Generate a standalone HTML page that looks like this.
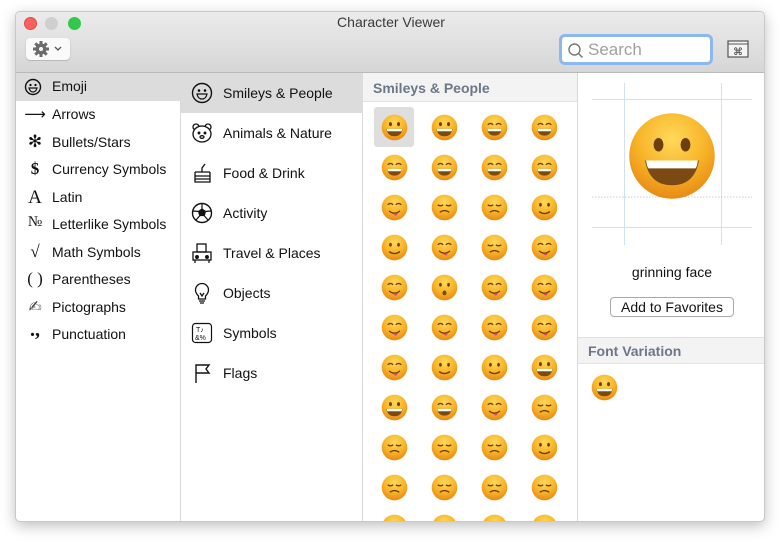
<!DOCTYPE html>
<html><head><meta charset="utf-8"><style>
*{box-sizing:border-box;margin:0;padding:0}
body{width:780px;height:543px;background:#fff;font-family:"Liberation Sans",sans-serif;position:relative;overflow:hidden}
.win{position:absolute;left:15px;top:11px;width:750px;height:511px;border:1px solid #c8c8c8;border-radius:5px;overflow:hidden;box-shadow:0 4px 14px rgba(0,0,0,.25);background:#fff}
.tb{position:absolute;left:0;top:0;width:750px;height:61px;background:linear-gradient(#ebebeb,#d6d6d6);border-bottom:1px solid #b9b9b9}
.dot{position:absolute;top:5px;width:13px;height:13px;border-radius:50%}
.title{position:absolute;top:2px;left:0;width:750px;text-align:center;font-size:14px;color:#3a3a3a}
.gear{position:absolute;left:10px;top:26px;width:44px;height:22px;background:#fafafa;border-radius:4px;box-shadow:0 0.5px 1px rgba(0,0,0,.3)}
.search{position:absolute;left:543px;top:22px;width:154px;height:31px;border:3px solid #8bb8ef;border-radius:6px;background:#fff;font-size:17px;color:#a0a0a0}
.c1{position:absolute;left:0;top:61px;width:165px;height:450px;border-right:1px solid #d8d8d8}
.c2{position:absolute;left:165px;top:61px;width:182px;height:450px;border-right:1px solid #d8d8d8}
.c3{position:absolute;left:347px;top:61px;width:215px;height:450px;border-right:1px solid #d8d8d8}
.c4{position:absolute;left:562px;top:61px;width:188px;height:450px}
.r1{position:absolute;left:0;width:165px;height:27px;font-size:14px;color:#111}
.r1 .i{position:absolute;left:8px;top:3px;width:22px;text-align:center;font-family:"Liberation Serif",serif;font-size:17px}
.r1 .t{position:absolute;left:36px;top:5px}
.r2{position:absolute;left:0;width:182px;height:40px;font-size:14px;color:#111}
.r2 .t{position:absolute;left:42px;top:12px}
.r2 svg{position:absolute;left:10px;top:9px}
.hd{height:29px;background:#f3f3f3;border-bottom:1px solid #e2e2e2;font-weight:bold;font-size:14px;color:#6c7787;padding:7px 0 0 10px}
.e{position:absolute}
</style></head><body>
<div class="win">
<div class="tb">
<div class="dot" style="left:8px;background:#fc605c;border:0.5px solid #de4a45"></div>
<div class="dot" style="left:29px;background:#cfcfcf"></div>
<div class="dot" style="left:52px;background:#34c84a"></div>
<div class="title">Character Viewer</div>
<div class="gear"><svg width="44" height="22"><g transform="translate(15,11)" fill="#6b6b6b"><circle r="5.5"/><g stroke="#6b6b6b" stroke-width="3"><line x1="0" y1="-8" x2="0" y2="8"/><line x1="-8" y1="0" x2="8" y2="0"/><line x1="-5.7" y1="-5.7" x2="5.7" y2="5.7"/><line x1="-5.7" y1="5.7" x2="5.7" y2="-5.7"/></g><circle r="2" fill="#fafafa"/></g><path d="M29 9l3 3 3-3" stroke="#555" fill="none" stroke-width="1.3"/></svg></div>
<div class="search"><svg width="20" height="20" style="position:absolute;left:5px;top:5px"><circle cx="7.5" cy="7.5" r="5.5" stroke="#777" stroke-width="1.4" fill="none"/><line x1="11.5" y1="11.5" x2="15.5" y2="15.5" stroke="#777" stroke-width="1.5"/></svg><span style="position:absolute;left:26px;top:3px">Search</span></div>
<svg width="22" height="18" style="position:absolute;left:711px;top:28px"><rect x="1" y="1" width="20" height="16" fill="#f4f4f4" stroke="#555" stroke-width="1.2"/><line x1="1" y1="4" x2="21" y2="4" stroke="#555"/><text x="11" y="15" font-size="10" text-anchor="middle" fill="#333" font-family="DejaVu Sans">⌘</text></svg>
</div>
<div class="c1">
<div class="r1" style="top:0;background:#dcdcdc;height:28px"><svg style="position:absolute;left:8px;top:5px" width="18" height="18"><circle cx="9" cy="9" r="7.5" stroke="#111" stroke-width="1.4" fill="none"/><circle cx="6.5" cy="7" r="1.1"/><circle cx="11.5" cy="7" r="1.1"/><path d="M5 10h8q-1 4-4 4t-4-4z" fill="none" stroke="#111" stroke-width="1.2"/></svg><span class="t">Emoji</span></div>
<div class="r1" style="top:28px"><span class="i" style="font-family:'DejaVu Sans';font-size:15px;top:4px">⟶</span><span class="t">Arrows</span></div>
<div class="r1" style="top:55.5px"><span class="i" style="font-family:'DejaVu Sans'">✻</span><span class="t">Bullets/Stars</span></div>
<div class="r1" style="top:83px"><span class="i" style="font-weight:bold">$</span><span class="t">Currency Symbols</span></div>
<div class="r1" style="top:110.5px"><span class="i" style="font-size:19px">A</span><span class="t">Latin</span></div>
<div class="r1" style="top:138px"><span class="i" style="font-size:15px">№</span><span class="t">Letterlike Symbols</span></div>
<div class="r1" style="top:165.5px"><span class="i">√</span><span class="t">Math Symbols</span></div>
<div class="r1" style="top:193px"><span class="i">( )</span><span class="t">Parentheses</span></div>
<div class="r1" style="top:220.5px"><span class="i" style="font-family:'DejaVu Sans';font-size:16px;color:#444">✍</span><span class="t">Pictographs</span></div>
<div class="r1" style="top:248px"><span class="i" style="font-weight:bold;font-size:20px;top:-2px">.,</span><span class="t">Punctuation</span></div>
</div>
<div class="c2">
<div class="r2" style="top:0;background:#dcdcdc"><svg width="22" height="22"><circle cx="11" cy="11" r="9.5" stroke="#111" stroke-width="1.4" fill="none"/><circle cx="8" cy="8.5" r="1.3"/><circle cx="14" cy="8.5" r="1.3"/><path d="M6 12h10q-1 5-5 5t-5-5z" fill="none" stroke="#111" stroke-width="1.2"/></svg><span class="t">Smileys &amp; People</span></div>
<div class="r2" style="top:40px"><svg width="22" height="22" fill="none" stroke="#111" stroke-width="1.3"><circle cx="5" cy="5" r="3"/><circle cx="17" cy="5" r="3"/><ellipse cx="11" cy="12" rx="9" ry="8" fill="#fff"/><circle cx="8" cy="11" r=".8" fill="#111"/><circle cx="14" cy="11" r=".8" fill="#111"/><ellipse cx="11" cy="15" rx="2" ry="1.3"/></svg><span class="t">Animals &amp; Nature</span></div>
<div class="r2" style="top:80px"><svg width="22" height="22" fill="none" stroke="#111" stroke-width="1.3"><path d="M4 10h15M4 10v10h15v-10M4 14h15M4 17h15M11 10v-4l3-4"/></svg><span class="t">Food &amp; Drink</span></div>
<div class="r2" style="top:120px"><svg width="22" height="22"><circle cx="11" cy="11" r="9.5" stroke="#111" stroke-width="1.4" fill="none"/><path d="M11 7l3.5 2.5-1.3 4h-4.4l-1.3-4z M11 2v5M2 9l6 .5M20 9l-6 .5M5 18l4-4.5M17 18l-4-4.5" fill="#111" stroke="#111" stroke-width="1.2"/></svg><span class="t">Activity</span></div>
<div class="r2" style="top:160px"><svg width="22" height="22" fill="none" stroke="#111" stroke-width="1.3"><rect x="6" y="2" width="9" height="8"/><rect x="2" y="10" width="18" height="8"/><circle cx="6" cy="15" r="1.3" fill="#111"/><circle cx="16" cy="15" r="1.3" fill="#111"/><path d="M4 18v3M18 18v3"/></svg><span class="t">Travel &amp; Places</span></div>
<div class="r2" style="top:200px"><svg width="22" height="22" fill="none" stroke="#111" stroke-width="1.3"><path d="M7.5 14q-3-3-3-6a6.5 6.5 0 0 1 13 0q0 3-3 6v3h-7z M8 19h6M9 21h4M9 11l2 3 2-3"/></svg><span class="t">Objects</span></div>
<div class="r2" style="top:240px"><svg width="22" height="22" fill="none" stroke="#111" stroke-width="1.2"><rect x="1.5" y="1.5" width="19" height="19" rx="3"/><text x="5" y="10" font-size="7" fill="#111" stroke="none">T♪</text><text x="4" y="18" font-size="7" fill="#111" stroke="none">&amp;%</text></svg><span class="t">Symbols</span></div>
<div class="r2" style="top:280px"><svg width="22" height="22" fill="none" stroke="#111" stroke-width="1.4"><path d="M5 21V3h13l-3 4 3 4H5"/></svg><span class="t">Flags</span></div>
</div>
<div class="c3"><div class="hd">Smileys &amp; People</div>
<div style="position:absolute;left:11px;top:34px;width:40px;height:40px;background:#dedede;border-radius:3px"></div>
<div id="grid"></div>
</div>
<div class="c4">
<svg width="188" height="180" style="position:absolute;left:0;top:0">
<g stroke="#cfe0f7" stroke-width="1"><line x1="46.5" y1="10" x2="46.5" y2="172"/><line x1="143.5" y1="10" x2="143.5" y2="172"/><line x1="14" y1="26.5" x2="174" y2="26.5"/><line x1="14" y1="154.5" x2="174" y2="154.5"/></g>
<line x1="14" y1="124" x2="174" y2="124" stroke="#ccc" stroke-dasharray="1.5 1.5"/>
</svg>
<div id="big" style="position:absolute;left:49px;top:38px"></div>
<div style="position:absolute;top:191px;width:188px;text-align:center;font-size:14px;color:#111">grinning face</div>
<div style="position:absolute;left:32px;top:224px;width:124px;height:20px;border:1px solid #a9a9a9;border-radius:4px;background:#fff;font-size:14px;text-align:center;line-height:18px;color:#111">Add to Favorites</div>
<div style="position:absolute;top:264px;left:0;width:188px;border-top:1px solid #e0e0e0"><div class="hd" style="height:26px;padding-top:5px">Font Variation</div></div>
<div id="fv" style="position:absolute;left:13px;top:301px"></div>
</div>
</div>
<script>
function face(d,v){v=v||0;var s='<svg width="'+d+'" height="'+d+'" viewBox="0 0 40 40"><defs><radialGradient id="g'+d+v+'" cx="50%" cy="30%" r="70%"><stop offset="0" stop-color="#ffd95a"/><stop offset=".55" stop-color="#f8b62a"/><stop offset="1" stop-color="#e88a14"/></radialGradient></defs><circle cx="20" cy="20" r="19" fill="url(#g'+d+v+')"/>';
var m=v%6;
if(m==0){s+='<ellipse cx="14" cy="15" rx="2.2" ry="3" fill="#6b3f10"/><ellipse cx="26" cy="15" rx="2.2" ry="3" fill="#6b3f10"/><path d="M8 22h24q-2 11-12 11t-12-11z" fill="#7a4a12"/><path d="M8.5 22h23q-.3 2.5-1 3.5h-21q-.7-1-1-3.5z" fill="#fff"/>';}
else if(m==1){s+='<path d="M10 16q4-4 8 0M22 16q4-4 8 0" stroke="#6b3f10" stroke-width="2" fill="none"/><path d="M9 22h22q-2 10-11 10t-11-10z" fill="#7a4a12"/><path d="M9.5 22h21q-.3 2.5-1 3.5h-19q-.7-1-1-3.5z" fill="#fff"/>';}
else if(m==2){s+='<ellipse cx="14" cy="16" rx="2" ry="2.8" fill="#6b3f10"/><ellipse cx="26" cy="16" rx="2" ry="2.8" fill="#6b3f10"/><path d="M12 26q8 6 16 0" stroke="#6b3f10" stroke-width="2" fill="none"/>';}
else if(m==3){s+='<path d="M10 16q4 3 8 0M22 16q4 3 8 0" stroke="#6b3f10" stroke-width="2" fill="none"/><path d="M13 27q7 -5 14 0" stroke="#6b3f10" stroke-width="2" fill="none"/>';}
else if(m==4){s+='<ellipse cx="14" cy="16" rx="2" ry="2.8" fill="#6b3f10"/><ellipse cx="26" cy="16" rx="2" ry="2.8" fill="#6b3f10"/><ellipse cx="20" cy="28" rx="3" ry="3.5" fill="#7a4a12"/>';}
else{s+='<path d="M10 16q4-4 8 0M22 16q4-4 8 0" stroke="#6b3f10" stroke-width="2" fill="none"/><path d="M12 25q8 7 16 0" stroke="#6b3f10" stroke-width="2" fill="none"/><path d="M18 29q4 6 7 0z" fill="#e0506a"/>';}
return s+'</svg>';}
var pat=[0,0,1,1, 1,1,1,1, 5,3,3,2, 2,5,3,5, 5,4,5,5, 5,5,5,5, 5,2,2,0, 0,1,5,3, 3,3,3,2, 3,3,3,3, 1,1,1,1];
var h='';for(var r=0;r<11;r++)for(var c=0;c<4;c++){var x=18+c*50,y=41+r*40;h+='<div class="e" style="left:'+x+'px;top:'+y+'px">'+face(27,pat[r*4+c]||0)+'</div>';}
document.getElementById('grid').innerHTML=h;
document.getElementById('big').innerHTML=face(90,0);
document.getElementById('fv').innerHTML=face(27,0);
</script>
</body></html>
